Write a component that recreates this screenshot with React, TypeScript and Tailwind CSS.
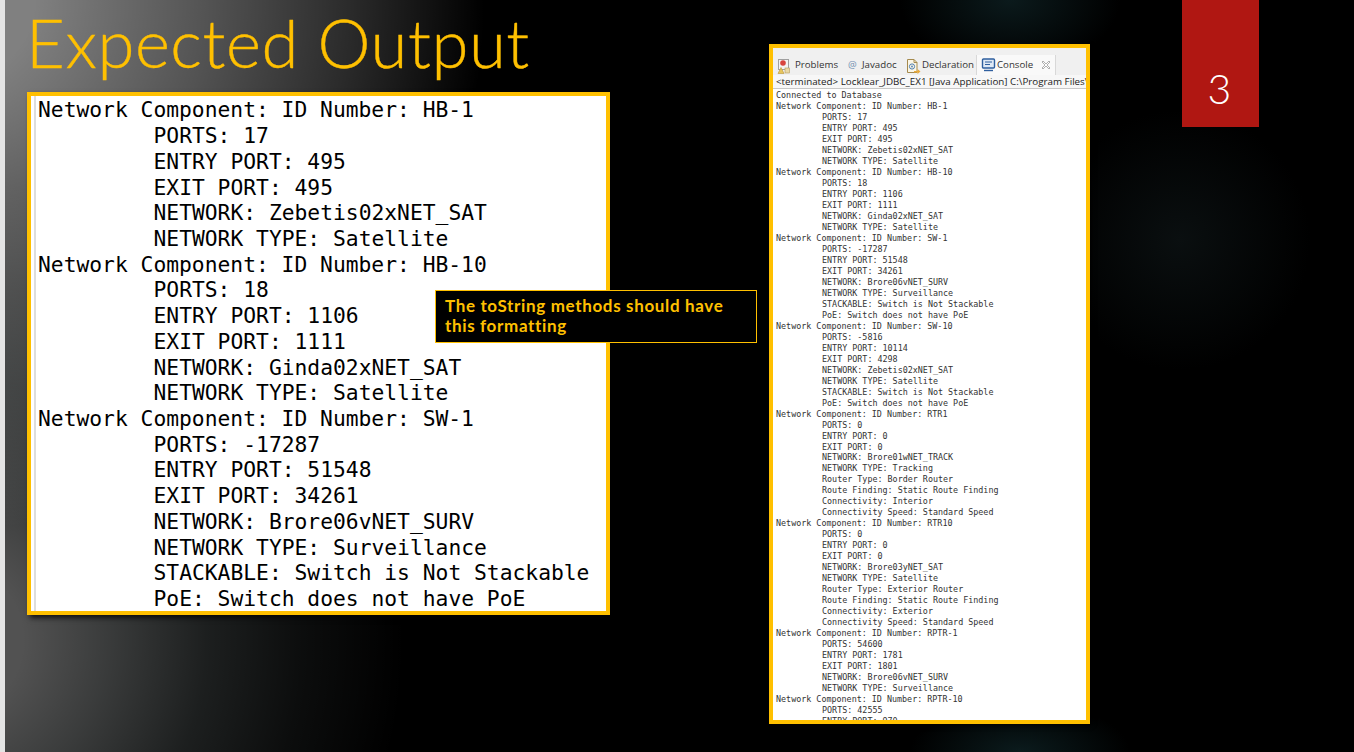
const expected: [string, string[]][] = [
  ["HB-1", ["PORTS: 17", "ENTRY PORT: 495", "EXIT PORT: 495", "NETWORK: Zebetis02xNET_SAT", "NETWORK TYPE: Satellite"]],
  ["HB-10", ["PORTS: 18", "ENTRY PORT: 1106", "EXIT PORT: 1111", "NETWORK: Ginda02xNET_SAT", "NETWORK TYPE: Satellite"]],
  ["SW-1", ["PORTS: -17287", "ENTRY PORT: 51548", "EXIT PORT: 34261", "NETWORK: Brore06vNET_SURV", "NETWORK TYPE: Surveillance", "STACKABLE: Switch is Not Stackable", "PoE: Switch does not have PoE"]],
];

const consoleRows: [string, string[]][] = [
  ...expected,
  ["SW-10", ["PORTS: -5816", "ENTRY PORT: 10114", "EXIT PORT: 4298", "NETWORK: Zebetis02xNET_SAT", "NETWORK TYPE: Satellite", "STACKABLE: Switch is Not Stackable", "PoE: Switch does not have PoE"]],
  ["RTR1", ["PORTS: 0", "ENTRY PORT: 0", "EXIT PORT: 0", "NETWORK: Brore01wNET_TRACK", "NETWORK TYPE: Tracking", "Router Type: Border Router", "Route Finding: Static Route Finding", "Connectivity: Interior", "Connectivity Speed: Standard Speed"]],
  ["RTR10", ["PORTS: 0", "ENTRY PORT: 0", "EXIT PORT: 0", "NETWORK: Brore03yNET_SAT", "NETWORK TYPE: Satellite", "Router Type: Exterior Router", "Route Finding: Static Route Finding", "Connectivity: Exterior", "Connectivity Speed: Standard Speed"]],
  ["RPTR-1", ["PORTS: 54600", "ENTRY PORT: 1781", "EXIT PORT: 1801", "NETWORK: Brore06vNET_SURV", "NETWORK TYPE: Surveillance"]],
  ["RPTR-10", ["PORTS: 42555", "ENTRY PORT: 970"]],
];

const ProblemsIcon = () => (
  <svg width="16" height="16" viewBox="0 0 16 16" className="shrink-0">
    <rect x="2.5" y="1.5" width="10" height="10" fill="#f3f3f3" stroke="#a0a0a0" />
    <circle cx="7" cy="5" r="2.8" fill="#d8443f" />
    <path d="M2 15.5 L5 9.5 L8 15.5 Z" fill="#e8c55a" stroke="#b8963a" strokeWidth="0.6" />
    <rect x="9" y="10" width="4.5" height="5" fill="#ead9a6" stroke="#b59a5a" strokeWidth="0.6" />
  </svg>
);

const DeclarationIcon = () => (
  <svg width="16" height="16" viewBox="0 0 16 16" className="shrink-0">
    <path d="M2.5 1.5 H9 L12 4.5 V14.5 H2.5 Z" fill="#fbf6e6" stroke="#a58a4e" />
    <path d="M9 1.5 V4.5 H12" fill="none" stroke="#a58a4e" />
    <circle cx="7" cy="8.5" r="2.6" fill="none" stroke="#4f7fb3" />
    <circle cx="7" cy="8.5" r="0.9" fill="#4f7fb3" />
    <path d="M9 13 H12.5 V11 L15.5 13.5 L12.5 16 V14.5 H9 Z" fill="#e8a93a" />
  </svg>
);

const ConsoleIcon = () => (
  <svg width="16" height="16" viewBox="0 0 16 16" className="shrink-0">
    <rect x="1.5" y="2" width="12" height="9" rx="1" fill="#dfe9f5" stroke="#2f5f9e" strokeWidth="1.4" />
    <path d="M4 5 H11 M4 7.5 H9" stroke="#2f5f9e" />
    <path d="M3 13.5 H12" stroke="#2f5f9e" strokeWidth="1.4" />
  </svg>
);

const CloseIcon = () => (
  <svg width="10" height="10" viewBox="0 0 10 10" className="ml-[8px] shrink-0">
    <path d="M1 2 L2 1 L5 4 L8 1 L9 2 L6 5 L9 8 L8 9 L5 6 L2 9 L1 8 L4 5 Z" fill="#ffffff" stroke="#9a9a9a" strokeWidth="0.8" />
  </svg>
);

export default function App() {
  return (
    <div className="relative flex h-[752px] w-[1354px] overflow-hidden bg-black">
      <div className="w-[5px] shrink-0 bg-[#e4e4e4]" />

      {/* Slide */}
      <main className="relative flex flex-1 bg-[radial-gradient(ellipse_110px_70px_at_1005px_0px,#0b1a1c,transparent),radial-gradient(ellipse_110px_50px_at_1015px_752px,#0b1b1d,transparent),radial-gradient(ellipse_130px_130px_at_1175px_240px,#0a0f10,transparent),radial-gradient(circle_530px_at_-50px_0px,rgba(255,255,255,0.5)_15%,rgba(255,255,255,0.33)_47%,rgba(255,255,255,0.165)_75%,rgba(255,255,255,0)_100%),radial-gradient(circle_460px_at_-60px_640px,rgba(255,255,255,0.32)_17%,rgba(248,255,255,0.235)_35%,rgba(235,255,255,0.12)_57%,rgba(230,255,255,0.05)_78%,rgba(230,255,255,0)_100%)]">
        {/* Left column */}
        <section className="relative ml-[22px] w-[583px] shrink-0">
          <h1 className="-ml-[1px] mt-[6px] h-[86px] whitespace-nowrap font-['Lato',sans-serif] text-[67px] leading-[72px] font-light tracking-[0.55px] text-[#ffc000] [-webkit-text-stroke:0.4px_#ffc000]">
            Expected Output
          </h1>
          <div className="h-[523px] overflow-hidden border-[4px] border-[#ffc000] bg-white pl-[3px] shadow-[3px_3px_5px_rgba(0,0,0,0.75)]">
            <div className="h-full border-l-2 border-[#dddddd] pl-[2px] pt-[1.4px] font-['DejaVu_Sans_Mono',monospace] text-[21.3px] leading-[25.72px] text-black">
              {expected.map(([id, rows]) => (
                <div key={id}>
                  <div className="whitespace-pre">Network Component: ID Number: {id}</div>
                  {rows.map((row) => (
                    <div key={row} className="whitespace-pre pl-[115.5px]">{row}</div>
                  ))}
                </div>
              ))}
            </div>
          </div>
        </section>

        {/* Console window */}
        <section className="relative ml-[159px] mt-[44px] h-[680px] w-[321px] shrink-0 overflow-hidden border-[4px] border-[#ffc000] bg-white shadow-[2px_2px_4px_rgba(0,0,0,0.7)]">
          <div className="flex h-[27px] items-end bg-[#f0f0f0] pl-[3px] font-['Open_Sans',sans-serif] text-[9.7px] text-[#333333]">
            <div className="flex h-[19px] w-[72px] items-center gap-[3px]"><ProblemsIcon />Problems</div>
            <div className="flex h-[19px] w-[57px] items-center gap-[3px]"><span className="w-[11px] text-[#6f8fb0]">@</span>Javadoc</div>
            <div className="flex h-[19px] w-[71px] items-center gap-[1px]"><DeclarationIcon />Declaration</div>
            <div className="flex h-[20px] w-[80px] items-center border-x border-[#d8d8d8] bg-[#f9f9f9] pl-[4px]">
              <ConsoleIcon />Console<CloseIcon />
            </div>
          </div>
          <div className="flex h-[14px] items-center overflow-hidden whitespace-nowrap border-b border-[#c8c8c8] bg-[#f7f7f7] pl-[3px] pt-[2px] font-['Open_Sans',sans-serif] text-[9.8px] text-[#222222]">
            &lt;terminated&gt; Locklear_JDBC_EX1 [Java Application] C:\Program Files\
          </div>
          <div className="pl-[3px] pt-[1px] font-['DejaVu_Sans_Mono',monospace] text-[8.4px] leading-[10.98px] text-[#333333]">
            <div className="whitespace-pre">Connected to Database</div>
            {consoleRows.map(([id, rows]) => (
              <div key={id}>
                <div className="whitespace-pre">Network Component: ID Number: {id}</div>
                {rows.map((row, i) => (
                  <div key={i} className="whitespace-pre pl-[46px]">{row}</div>
                ))}
              </div>
            ))}
          </div>
        </section>

        {/* Slide number */}
        <div className="relative ml-[92px] flex h-[127px] w-[77px] shrink-0 items-end justify-center bg-[#b01712] pb-[14px] pr-[2px] font-['Lato',sans-serif] text-[41px] leading-[48px] font-light text-white">
          3
        </div>

        {/* Callout */}
        <div className="absolute left-[430px] top-[290px] h-[53px] w-[322px] border border-[#ffc000] bg-black pl-[9px] pt-[5px] font-['Lato',sans-serif] text-[17px] leading-[20px] font-bold tracking-[0.65px] text-[#ffc000]">
          The toString methods should have<br />this formatting
        </div>
      </main>
    </div>
  );
}
